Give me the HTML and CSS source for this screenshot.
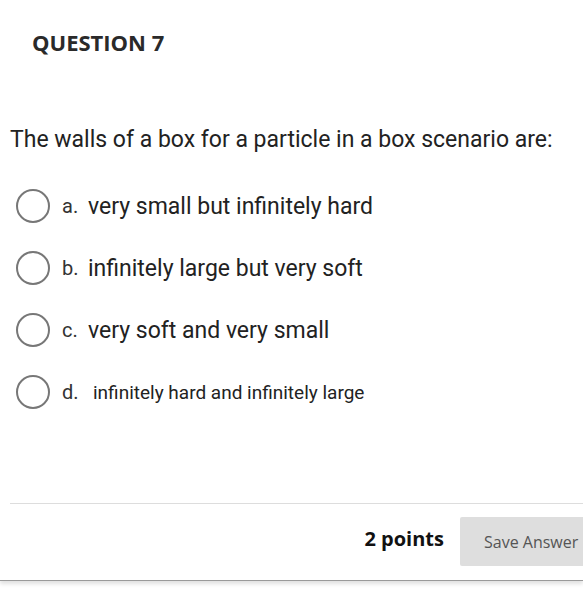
FILE: index.html
```html
<!DOCTYPE html>
<html>
<head>
<meta charset="utf-8">
<link rel="stylesheet" href="styles.css">
</head>
<body>
<div class="card">
  <h2 class="title">QUESTION 7</h2>
  <p class="question">The walls of a box for a particle in a box scenario are:</p>
  <ul class="options">
    <li class="option"><span class="radio"></span><span class="letter">a.</span><span class="text">very small but infinitely hard</span></li>
    <li class="option"><span class="radio"></span><span class="letter">b.</span><span class="text">infinitely large but very soft</span></li>
    <li class="option"><span class="radio"></span><span class="letter">c.</span><span class="text">very soft and very small</span></li>
    <li class="option"><span class="radio"></span><span class="letter">d.</span><span class="text small">infinitely hard and infinitely large</span></li>
  </ul>
  <div class="divider"></div>
  <div class="footer">
    <span class="points">2 points</span>
    <button class="save">Save Answer</button>
  </div>
</div>
</body>
</html>
```
FILE: styles.css
```css
html, body {
  margin: 0;
  padding: 0;
  background: #fff;
}
body {
  width: 583px;
  height: 591px;
  overflow: hidden;
}
.card {
  border-bottom: 1px solid #9a9a9a;
  box-shadow: 0 3px 4px rgba(0,0,0,0.12);
  height: 581px;
  box-sizing: border-box;
  padding-top: 27px;
}
.title {
  margin: 0;
  padding-left: 32px;
  font-family: "Open Sans", sans-serif;
  font-weight: 700;
  font-size: 22px;
  line-height: 30px;
  color: #2a2a2a;
}
.question {
  margin: 68px 0 0 0;
  padding-left: 10px;
  font-family: Roboto, sans-serif;
  font-size: 23px;
  line-height: 30px;
  color: #222;
}
.options {
  list-style: none;
  margin: 20px 0 0 0;
  padding: 0 0 0 16px;
}
.option {
  display: flex;
  align-items: center;
  height: 62px;
  font-family: Roboto, sans-serif;
  color: #222;
}
.radio {
  width: 30px;
  height: 30px;
  border: 2px solid #777;
  border-radius: 50%;
  flex: none;
}
.letter {
  margin-left: 12px;
  width: 26px;
  font-size: 20px;
  color: #333;
}
.text {
  font-size: 23px;
}
.text.small {
  font-size: 19px;
  margin-left: 5px;
}
.divider {
  margin: 80px 0 0 10px;
  border-top: 1px solid #ddd;
}
.footer {
  display: flex;
  justify-content: flex-end;
  align-items: center;
  margin-top: 13px;
}
.points {
  font-family: "Open Sans", sans-serif;
  font-weight: 700;
  font-size: 20px;
  color: #111;
  margin-right: 16px;
  padding-bottom: 6px;
}
.save {
  width: 127px;
  height: 49px;
  margin-right: -4px;
  border: none;
  border-radius: 2px;
  background: #dedede;
  font-family: "Open Sans", sans-serif;
  font-size: 16px;
  color: #555;
  text-align: left;
  padding-left: 24px;
}
```
